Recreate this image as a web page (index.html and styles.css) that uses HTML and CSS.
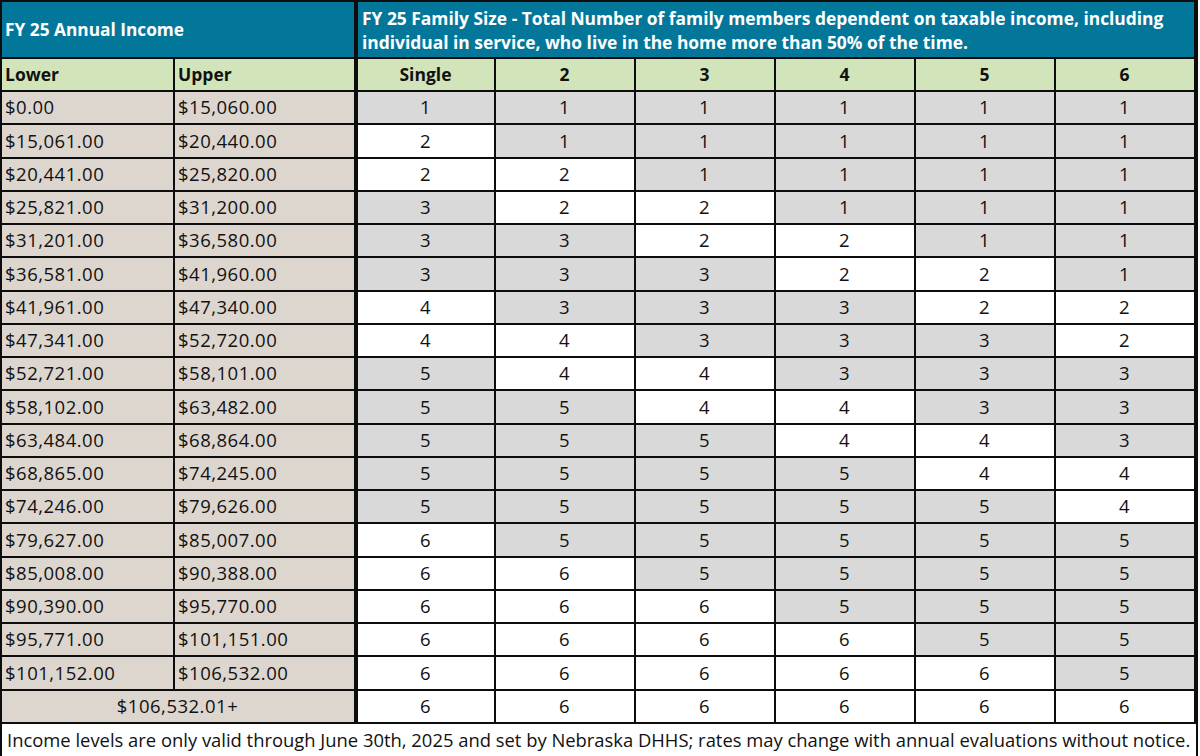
FILE: index.html
```html
<!DOCTYPE html>
<html>
<head>
<meta charset="utf-8">
<link rel="stylesheet" href="styles.css">
</head>
<body>
<div class="sheet">
  <div class="cell teal left-span sep">FY 25 Annual Income</div>
  <div class="cell teal right-span">FY 25 Family Size - Total Number of family members dependent on taxable income, including individual in service, who live in the home more than 50% of the time.</div>

  <div class="cell green">Lower</div>
  <div class="cell green sep">Upper</div>
  <div class="cell green c">Single</div>
  <div class="cell green c">2</div>
  <div class="cell green c">3</div>
  <div class="cell green c">4</div>
  <div class="cell green c">5</div>
  <div class="cell green c">6</div>

  <div class="cell beige">$0.00</div><div class="cell beige sep">$15,060.00</div>
  <div class="cell g">1</div><div class="cell g">1</div><div class="cell g">1</div><div class="cell g">1</div><div class="cell g">1</div><div class="cell g">1</div>

  <div class="cell beige">$15,061.00</div><div class="cell beige sep">$20,440.00</div>
  <div class="cell w">2</div><div class="cell g">1</div><div class="cell g">1</div><div class="cell g">1</div><div class="cell g">1</div><div class="cell g">1</div>

  <div class="cell beige">$20,441.00</div><div class="cell beige sep">$25,820.00</div>
  <div class="cell w">2</div><div class="cell w">2</div><div class="cell g">1</div><div class="cell g">1</div><div class="cell g">1</div><div class="cell g">1</div>

  <div class="cell beige">$25,821.00</div><div class="cell beige sep">$31,200.00</div>
  <div class="cell g">3</div><div class="cell w">2</div><div class="cell w">2</div><div class="cell g">1</div><div class="cell g">1</div><div class="cell g">1</div>

  <div class="cell beige">$31,201.00</div><div class="cell beige sep">$36,580.00</div>
  <div class="cell g">3</div><div class="cell g">3</div><div class="cell w">2</div><div class="cell w">2</div><div class="cell g">1</div><div class="cell g">1</div>

  <div class="cell beige">$36,581.00</div><div class="cell beige sep">$41,960.00</div>
  <div class="cell g">3</div><div class="cell g">3</div><div class="cell g">3</div><div class="cell w">2</div><div class="cell w">2</div><div class="cell g">1</div>

  <div class="cell beige">$41,961.00</div><div class="cell beige sep">$47,340.00</div>
  <div class="cell w">4</div><div class="cell g">3</div><div class="cell g">3</div><div class="cell g">3</div><div class="cell w">2</div><div class="cell w">2</div>

  <div class="cell beige">$47,341.00</div><div class="cell beige sep">$52,720.00</div>
  <div class="cell w">4</div><div class="cell w">4</div><div class="cell g">3</div><div class="cell g">3</div><div class="cell g">3</div><div class="cell w">2</div>

  <div class="cell beige">$52,721.00</div><div class="cell beige sep">$58,101.00</div>
  <div class="cell g">5</div><div class="cell w">4</div><div class="cell w">4</div><div class="cell g">3</div><div class="cell g">3</div><div class="cell g">3</div>

  <div class="cell beige">$58,102.00</div><div class="cell beige sep">$63,482.00</div>
  <div class="cell g">5</div><div class="cell g">5</div><div class="cell w">4</div><div class="cell w">4</div><div class="cell g">3</div><div class="cell g">3</div>

  <div class="cell beige">$63,484.00</div><div class="cell beige sep">$68,864.00</div>
  <div class="cell g">5</div><div class="cell g">5</div><div class="cell g">5</div><div class="cell w">4</div><div class="cell w">4</div><div class="cell g">3</div>

  <div class="cell beige">$68,865.00</div><div class="cell beige sep">$74,245.00</div>
  <div class="cell g">5</div><div class="cell g">5</div><div class="cell g">5</div><div class="cell g">5</div><div class="cell w">4</div><div class="cell w">4</div>

  <div class="cell beige">$74,246.00</div><div class="cell beige sep">$79,626.00</div>
  <div class="cell g">5</div><div class="cell g">5</div><div class="cell g">5</div><div class="cell g">5</div><div class="cell g">5</div><div class="cell w">4</div>

  <div class="cell beige">$79,627.00</div><div class="cell beige sep">$85,007.00</div>
  <div class="cell w">6</div><div class="cell g">5</div><div class="cell g">5</div><div class="cell g">5</div><div class="cell g">5</div><div class="cell g">5</div>

  <div class="cell beige">$85,008.00</div><div class="cell beige sep">$90,388.00</div>
  <div class="cell w">6</div><div class="cell w">6</div><div class="cell g">5</div><div class="cell g">5</div><div class="cell g">5</div><div class="cell g">5</div>

  <div class="cell beige">$90,390.00</div><div class="cell beige sep">$95,770.00</div>
  <div class="cell w">6</div><div class="cell w">6</div><div class="cell w">6</div><div class="cell g">5</div><div class="cell g">5</div><div class="cell g">5</div>

  <div class="cell beige">$95,771.00</div><div class="cell beige sep">$101,151.00</div>
  <div class="cell w">6</div><div class="cell w">6</div><div class="cell w">6</div><div class="cell w">6</div><div class="cell g">5</div><div class="cell g">5</div>

  <div class="cell beige">$101,152.00</div><div class="cell beige sep">$106,532.00</div>
  <div class="cell w">6</div><div class="cell w">6</div><div class="cell w">6</div><div class="cell w">6</div><div class="cell w">6</div><div class="cell g">5</div>

  <div class="cell beige left-span sep c">$106,532.01+</div>
  <div class="cell w">6</div><div class="cell w">6</div><div class="cell w">6</div><div class="cell w">6</div><div class="cell w">6</div><div class="cell w">6</div>

  <div class="cell foot">Income levels are only valid through June 30th, 2025 and set by Nebraska DHHS; rates may change with annual evaluations without notice.</div>
</div>
</body>
</html>
```
FILE: styles.css
```css
html, body {
  margin: 0;
  padding: 0;
  background: #ffffff;
  overflow: hidden;
}

body {
  width: 1200px;
  height: 756px;
  font-family: "Open Sans", "Liberation Sans", sans-serif;
  color: #111111;
}

.sheet {
  width: 1198px;
  display: grid;
  grid-template-columns: 171px 181px 136px 138px 138px 138px 138px 138px;
  grid-template-rows: 55px 31px repeat(19, 31.26px) 33px;
  column-gap: 2px;
  row-gap: 2px;
  padding: 2px 2px 0 2px;
  box-sizing: border-box;
  background: #0d0d0d;
}

.cell {
  display: flex;
  align-items: center;
  font-size: 18.5px;
  letter-spacing: 0.5px;
  line-height: 1;
  padding: 0 4px 0 3px;
  white-space: nowrap;
  overflow: hidden;
}

.sep {
  margin-right: 2px;
}

.left-span {
  grid-column: 1 / 3;
}

.right-span {
  grid-column: 3 / 9;
}

.teal {
  background: #03779a;
  color: #ffffff;
  font-weight: 700;
  font-size: 17.3px;
  letter-spacing: 0;
}

.teal.right-span {
  white-space: normal;
  line-height: 24px;
  padding: 0 4px;
  font-size: 17.4px;
}

.green {
  background: #d2e4b9;
  font-weight: 700;
  font-size: 17.5px;
  letter-spacing: 0;
}

.c {
  justify-content: center;
}

.beige {
  background: #ddd6cf;
}

.g, .w {
  justify-content: center;
}

.g {
  background: #d9d9d9;
}

.w {
  background: #ffffff;
}

.foot {
  grid-column: 1 / 9;
  background: #ffffff;
  padding-left: 5px;
  margin-right: -2px;
  font-size: 18.4px;
  letter-spacing: 0;
}
```
